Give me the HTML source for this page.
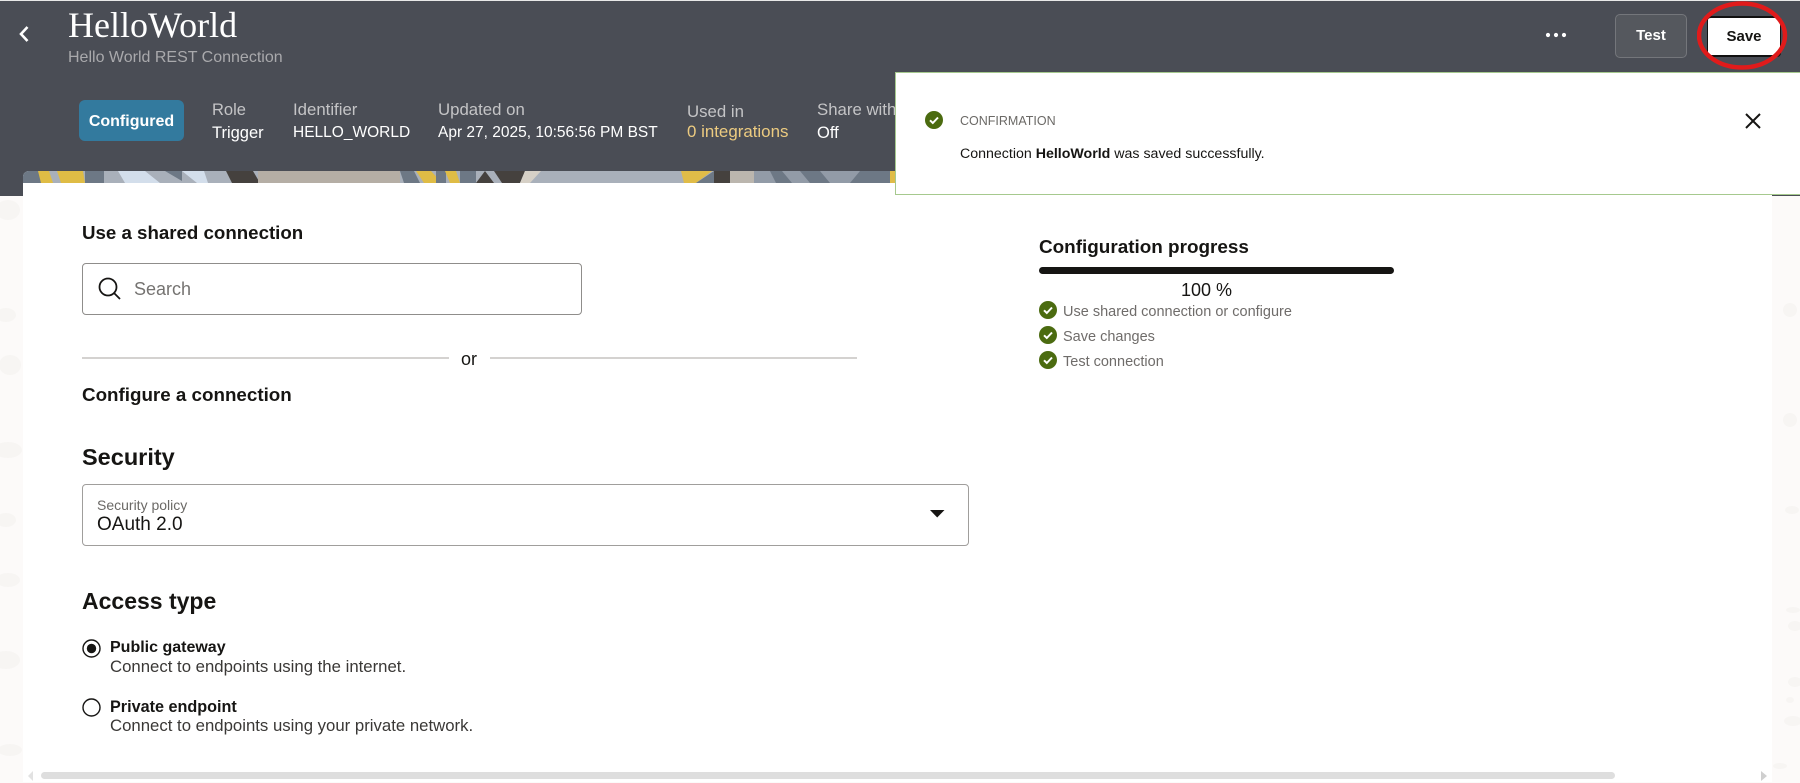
<!DOCTYPE html>
<html><head><meta charset="utf-8">
<style>
html,body{margin:0;padding:0;width:1800px;height:783px;overflow:hidden;background:#fcfaf9;font-family:"Liberation Sans",sans-serif;color:#161513}
.a{position:absolute;white-space:nowrap;line-height:1}
svg{position:absolute;display:block}
.lbl{font-size:16.800px;color:#c4c4c6}
.val{font-size:15.500px;color:#fff}
.b{font-weight:bold}
.g{color:#6f6c6a}
</style></head><body>
<svg style="left:0;top:190px" width="1800" height="593" fill="#f7f5f3">
<ellipse cx="8" cy="20" rx="12" ry="10"/><ellipse cx="6" cy="125" rx="10" ry="7"/><ellipse cx="10" cy="175" rx="11" ry="10"/><ellipse cx="8" cy="260" rx="14" ry="8"/><ellipse cx="6" cy="330" rx="10" ry="7"/><ellipse cx="8" cy="390" rx="12" ry="7"/><ellipse cx="6" cy="470" rx="14" ry="9"/><ellipse cx="10" cy="560" rx="12" ry="6"/>
<ellipse cx="1793" cy="420" rx="7" ry="3"/><ellipse cx="1795" cy="436" rx="7" ry="5"/><ellipse cx="1795" cy="492" rx="7" ry="5"/><ellipse cx="1790" cy="510" rx="4" ry="3"/><ellipse cx="1793" cy="531" rx="9" ry="5"/><ellipse cx="1780" cy="576" rx="7" ry="3"/><ellipse cx="1790" cy="120" rx="7" ry="7"/><ellipse cx="1790" cy="230" rx="7" ry="7"/><ellipse cx="1792" cy="320" rx="7" ry="4"/>
</svg>
<div class="a" style="left:0;top:1px;width:1800px;height:195px;background:#4a4d55"></div>
<div class="a" style="left:0;top:0;width:1800px;height:1px;background:#e8e8e8"></div>

<!-- card -->
<div class="a" style="left:23px;top:171px;width:1749px;height:611px;background:#fff;border-radius:6px 6px 0 0"></div>
<svg style="left:23px;top:171px" width="880" height="12" viewBox="23 0 880 12">
<defs><clipPath id="c"><path d="M23 12V6a6 6 0 0 1 6-6H903V12Z"/></clipPath></defs>
<g clip-path="url(#c)">
<rect x="23" width="880" height="12" fill="#a9b0ba"/>
<rect x="23" width="20" height="12" fill="#6d7885"/>
<path d="M38 0H49L53 12H41Z" fill="#dfbc45"/>
<path d="M57 0H83L85 12H61Z" fill="#dfbc45"/>
<rect x="85" width="19" height="12" fill="#6d7885"/>
<path d="M118 0H145L160 12H125Z" fill="#d3deeb"/>
<path d="M165 0H182V10Z" fill="#6d7885"/>
<path d="M182 0H204L208 12H197Z" fill="#d3deeb"/>
<path d="M226 0H253L260 12H232Z" fill="#45413e"/>
<rect x="258" width="142" height="12" fill="#b5aea5"/>
<path d="M400 0H414L420 12H404Z" fill="#6d7885"/>
<path d="M416 0H431L442 12H424Z" fill="#dfbc45"/>
<rect x="436" width="10" height="12" fill="#6d7885"/>
<path d="M445 0H456L460 12H450Z" fill="#dfbc45"/>
<rect x="460" width="16" height="12" fill="#6d7885"/>
<path d="M485 0L494 12H476Z" fill="#45413e"/>
<path d="M494 0H525L520 12H502Z" fill="#45413e"/>
<path d="M525 0H541L530 12H520Z" fill="#d6d0c6"/>
<path d="M681 0H712L696 12H684Z" fill="#e0bc48"/>
<path d="M714 0L696 12H714Z" fill="#6d7885"/>
<rect x="714" width="16" height="12" fill="#45413e"/>
<rect x="730" width="24" height="12" fill="#bbb6ae"/>
<rect x="754" width="136" height="12" fill="#929ba7"/>
<path d="M770 0H782L792 12H776Z" fill="#6d7885"/>
<path d="M800 0H820L830 12H810Z" fill="#6d7885"/>
<path d="M860 0H890V12H850Z" fill="#6d7885"/>
<rect x="890" width="13" height="12" fill="#e0bc48"/>
</g></svg>

<!-- header -->
<svg style="left:17px;top:24px" width="14" height="20" viewBox="0 0 14 20"><path d="M10.500 3 4 10l6.500 7" fill="none" stroke="#fff" stroke-width="2.600"/></svg>
<div class="a" style="left:68px;top:7px;font:36px/36px 'Liberation Serif',serif;color:#fff">HelloWorld</div>
<div class="a" style="left:68px;top:50px;font-size:16px;color:#a9a9ac">Hello World REST Connection</div>
<div class="a b" style="left:79px;top:100px;width:105px;height:41px;background:#337a9e;border-radius:6px;color:#fff;font-size:16px;line-height:43px;text-align:center">Configured</div>
<div class="a lbl" style="left:212px;top:102px;font-size:16.500px">Role</div>
<div class="a val" style="left:212px;top:125px;font-size:16.500px">Trigger</div>
<div class="a lbl" style="left:293px;top:102px">Identifier</div>
<div class="a val" style="left:293px;top:125px">HELLO_WORLD</div>
<div class="a lbl" style="left:438px;top:102px">Updated on</div>
<div class="a val" style="left:438px;top:125px">Apr 27, 2025, 10:56:56 PM BST</div>
<div class="a lbl" style="left:687px;top:104px">Used in</div>
<div class="a val" style="left:687px;top:124px;color:#eccb80;font-size:16.900px">0 integrations</div>
<div class="a lbl" style="left:817px;top:102px">Share with</div>
<div class="a val" style="left:817px;top:125px;font-size:16.500px">Off</div>

<svg style="left:1545px;top:31px" width="22" height="8" fill="#fff"><circle cx="3" cy="4" r="2.100"/><circle cx="11" cy="4" r="2.100"/><circle cx="19" cy="4" r="2.100"/></svg>
<div class="a b" style="left:1615px;top:14px;width:70px;height:42px;background:#55585e;border:1px solid #74767b;border-radius:5px;color:#fff;font-size:15px;line-height:42px;text-align:center">Test</div>
<div class="a b" style="left:1707px;top:16px;width:72px;height:37px;background:#fff;border:1px solid #111;border-width:2px 1px;border-radius:4px;color:#161513;font-size:15px;line-height:37px;text-align:center">Save</div>
<svg style="left:1697px;top:0" width="92" height="72"><ellipse cx="45" cy="35.500" rx="43" ry="32" fill="none" stroke="#e01b1b" stroke-width="4.500"/></svg>

<!-- notification -->
<div class="a" style="left:895px;top:72px;width:905px;height:121px;background:#fff;border:1px solid #a6c98e;border-right:0;box-sizing:content-box"></div>
<svg style="left:925px;top:111px" width="18" height="18" viewBox="0 0 18 18"><circle cx="9" cy="9" r="9" fill="#4b6b10"/><path d="M5 9.300l2.800 2.700L13 6.500" fill="none" stroke="#fff" stroke-width="2"/></svg>
<div class="a" style="left:960px;top:115px;font-size:12.500px;color:#6b6966">CONFIRMATION</div>
<div class="a" style="left:960px;top:147px;font-size:14.200px">Connection <b>HelloWorld</b> was saved successfully.</div>
<svg style="left:1744px;top:112px" width="18" height="18" viewBox="0 0 18 18"><path d="M2 2l14 14M16 2 2 16" stroke="#161513" stroke-width="2" fill="none"/></svg>

<!-- left -->
<div class="a b" style="left:82px;top:223.500px;font-size:18.700px">Use a shared connection</div>
<div class="a" style="left:82px;top:263px;width:498px;height:50px;border:1px solid #8f8d8b;border-radius:4px"></div>
<svg style="left:97px;top:276px" width="26" height="26" viewBox="0 0 26 26"><circle cx="11" cy="11" r="8.500" fill="none" stroke="#161513" stroke-width="1.800"/><path d="M17 17l6 6" stroke="#161513" stroke-width="1.800"/></svg>
<div class="a" style="left:134px;top:280px;font-size:18px;color:#757371">Search</div>
<div class="a" style="left:82px;top:357px;width:367px;height:2px;background:#d4d2d0"></div>
<div class="a" style="left:490px;top:357px;width:367px;height:2px;background:#d4d2d0"></div>
<div class="a" style="left:461px;top:350px;font-size:18px">or</div>
<div class="a b" style="left:82px;top:386px;font-size:18.800px">Configure a connection</div>
<div class="a b" style="left:82px;top:446px;font-size:23.500px">Security</div>
<div class="a" style="left:82px;top:484px;width:885px;height:60px;border:1px solid #a09e9c;border-radius:4px"></div>
<div class="a" style="left:97px;top:498px;font-size:14px;color:#6b6966">Security policy</div>
<div class="a" style="left:97px;top:515px;font-size:19px">OAuth 2.0</div>
<svg style="left:930px;top:509px" width="15" height="9"><path d="M0 1h14.500L7.200 8.500Z" fill="#161513"/></svg>
<div class="a b" style="left:82px;top:590px;font-size:23px">Access type</div>
<svg style="left:82px;top:639px" width="19" height="19"><circle cx="9.500" cy="9.500" r="8.500" fill="none" stroke="#161513" stroke-width="1.400"/><circle cx="9.500" cy="9.500" r="4.700" fill="#161513"/></svg>
<div class="a b" style="left:110px;top:640px;font-size:16px">Public gateway</div>
<div class="a" style="left:110px;top:659px;font-size:16.750px;color:#3a3836">Connect to endpoints using the internet.</div>
<svg style="left:82px;top:698px" width="19" height="19"><circle cx="9.500" cy="9.500" r="8.500" fill="none" stroke="#161513" stroke-width="1.400"/></svg>
<div class="a b" style="left:110px;top:699px;font-size:16.200px">Private endpoint</div>
<div class="a" style="left:110px;top:718px;font-size:16.750px;color:#3a3836">Connect to endpoints using your private network.</div>

<!-- right -->
<div class="a b" style="left:1039px;top:239px;font-size:18.900px">Configuration progress</div>
<div class="a" style="left:1039px;top:267px;width:355px;height:7px;border-radius:4px;background:#161513"></div>
<div class="a" style="left:1181px;top:281px;font-size:18px">100 %</div>
<svg style="left:1039px;top:301px" width="18" height="70" viewBox="0 0 18 70">
<g><circle cx="9" cy="9" r="9" fill="#4b6b10"/><path d="M5 9.300l2.800 2.700L13 6.500" fill="none" stroke="#fff" stroke-width="2"/></g>
<g transform="translate(0 25)"><circle cx="9" cy="9" r="9" fill="#4b6b10"/><path d="M5 9.300l2.800 2.700L13 6.500" fill="none" stroke="#fff" stroke-width="2"/></g>
<g transform="translate(0 50)"><circle cx="9" cy="9" r="9" fill="#4b6b10"/><path d="M5 9.300l2.800 2.700L13 6.500" fill="none" stroke="#fff" stroke-width="2"/></g>
</svg>
<div class="a g" style="left:1063px;top:304.500px;font-size:14.500px">Use shared connection or configure</div>
<div class="a g" style="left:1063px;top:330px;font-size:14.500px">Save changes</div>
<div class="a g" style="left:1063px;top:355px;font-size:14.500px">Test connection</div>

<!-- scrollbar -->
<div class="a" style="left:41px;top:772px;width:1574px;height:7px;border-radius:4px;background:#dedede"></div>
<svg style="left:28px;top:771px" width="6" height="10"><path d="M5 0v10L0 5Z" fill="#e2e2e2"/></svg>
<svg style="left:1761px;top:771px" width="6" height="10"><path d="M0 0v10l6-5Z" fill="#cfcfcf"/></svg>
</body></html>
